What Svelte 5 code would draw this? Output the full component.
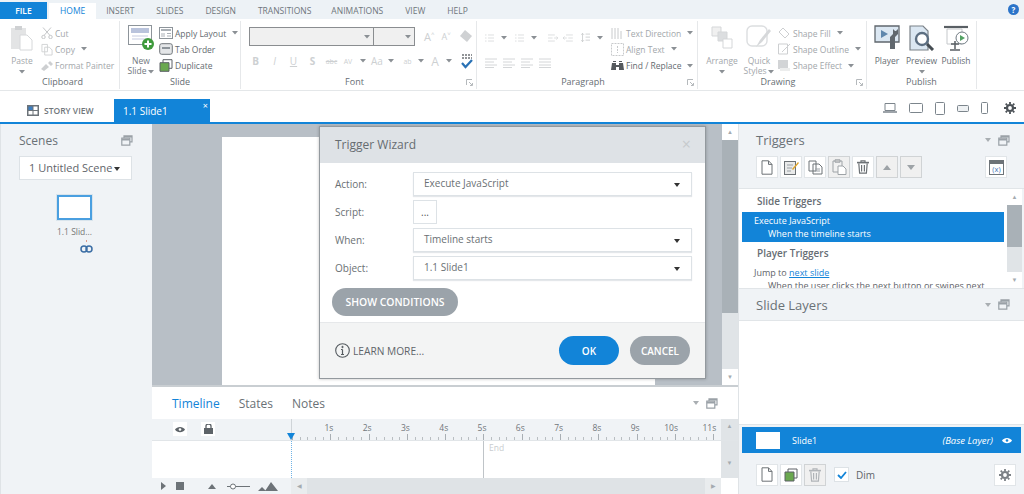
<script>
  const tabs = ["HOME", "INSERT", "SLIDES", "DESIGN", "TRANSITIONS", "ANIMATIONS", "VIEW", "HELP"];
  const seconds = [1, 2, 3, 4, 5, 6, 7, 8, 9, 10, 11];
  const fields = [
    { label: "Action:", value: "Execute JavaScript" },
    { label: "Script:", button: true },
    { label: "When:", value: "Timeline starts" },
    { label: "Object:", value: "1.1 Slide1" },
  ];
</script>

{#snippet caret()}
  <svg class="caret" width="6" height="4" viewBox="0 0 6 4"><path d="M0 0h6L3 3.5z" /></svg>
{/snippet}

{#snippet restore()}
  <svg width="12" height="11" viewBox="0 0 12 11" fill="none" stroke="#9aa1a7" stroke-width="1.2">
    <path d="M3 3V.8h8v6H9" /><path d="M.8 3.2h8v7h-8z" /><path d="M.8 4.6h8M3 1.8h8" stroke-width="1.6" />
  </svg>
{/snippet}

{#snippet launcher()}
  <svg class="launch" width="7" height="7" viewBox="0 0 7 7" fill="none" stroke="#b5b9bc"><path d="M.5 6V.5H6" /><path d="M3 3l3 3M4 6.500h2.500V4" /></svg>
{/snippet}

{#snippet pageIcon()}
  <svg width="12" height="15" viewBox="0 0 12 15" fill="#fff" stroke="#6d7276"><path d="M1 .8h6.5L11 4.4v9.8H1zM7.5.8v3.6H11" /></svg>
{/snippet}

{#snippet trashIcon(color)}
  <svg width="12" height="14" viewBox="0 0 12 14" fill="none" stroke={color} stroke-width="1.2">
    <path d="M0 2.6h12" stroke-width="1.6" /><path d="M4 2V.8h4V2M1.8 3.4l.8 9.8h6.8l.8-9.8M4.6 5v6.5M7.4 5v6.5" />
  </svg>
{/snippet}

<div class="app">
  <header class="tabbar">
    <div class="file">FILE</div>
    {#each tabs as tab, i}
      <div class="tab" class:current={i === 0}>{tab}</div>
    {/each}
    <div class="help">?</div>
  </header>

  <section class="ribbon">
    <div class="group" style="width: 120px">
      <div class="tools">
        <div class="big wide-paste">
          <svg width="24" height="26" viewBox="0 0 24 26">
            <rect x="1" y="3" width="15" height="21" fill="#e3e4e5" />
            <rect x="5" y="1" width="7" height="4" fill="#cfd1d3" />
            <path d="M10 10h7l5 5v10H10z" fill="#fff" stroke="#d6d8da" />
          </svg>
          <span>Paste</span>
          {@render caret()}
        </div>
        <div class="stack">
          <div class="row">
            <svg width="12" height="12" viewBox="0 0 12 12" fill="none" stroke="#c4c6c8"><path d="M2 .5l7 8M10 .5l-7 8" /><circle cx="2.5" cy="10" r="1.7" /><circle cx="9.5" cy="10" r="1.7" /></svg>
            Cut
          </div>
          <div class="row">
            <svg width="12" height="13" viewBox="0 0 13 13" fill="#fff" stroke="#d0d2d4"><path d="M1 1h6v8H1zM4 4h5l3 3v5.500H4z" /></svg>
            Copy {@render caret()}
          </div>
          <div class="row">
            <svg width="12" height="12" viewBox="0 0 12 12" fill="#cdcfd1"><path d="M0 9l5-5 3 3-5 4zM7 3l2-2 3 3-2 2z" /></svg>
            Format Painter
          </div>
        </div>
      </div>
      <div class="caption shift">Clipboard</div>
    </div>

    <div class="group" style="width: 121px">
      <div class="tools">
        <div class="big new-slide">
          <svg width="26" height="26" viewBox="0 0 26 26">
            <rect x=".5" y=".5" width="23" height="19" fill="#fff" stroke="#8d949a" />
            <rect x="3" y="3" width="18" height="5" fill="#b9c3dc" />
            <path d="M4 11h16M4 14h16" stroke="#c5cbe0" />
            <circle cx="20" cy="19" r="6" fill="#3f9a3c" />
            <path d="M20 15.500v7M16.500 19h7" stroke="#fff" stroke-width="2" />
          </svg>
          <span>New</span>
          <span>Slide{@render caret()}</span>
        </div>
        <div class="stack dark">
          <div class="row">
            <svg width="14" height="12" viewBox="0 0 14 12"><rect x=".5" y=".5" width="13" height="11" fill="#fff" stroke="#8d949a" /><rect x="2" y="2" width="10" height="2" fill="#aab0b6" /><path d="M2 6h4v4H2z" fill="#d5d8db" /><path d="M8 6.500h4M8 9h4" stroke="#aab0b6" /></svg>
            Apply Layout {@render caret()}
          </div>
          <div class="row">
            <svg width="14" height="12" viewBox="0 0 14 12"><rect x=".7" y=".7" width="12.600" height="10.600" rx="2" fill="#e4e6e8" stroke="#70767b" /><rect x="3" y="4" width="8" height="2" fill="#8d949a" /></svg>
            Tab Order
          </div>
          <div class="row">
            <svg width="14" height="13" viewBox="0 0 14 13" fill="#fff" stroke="#5c6166"><path d="M4 .7h9v8.600H4z" /><path d="M1 3.700h9v8.600H1z" fill="#6aa84f" /></svg>
            Duplicate
          </div>
        </div>
      </div>
      <div class="caption">Slide</div>
    </div>

    <div class="group" style="width: 236px">
      <div class="font-tools">
        <div class="font-top">
          <div class="combo name"><i></i>{@render caret()}</div>
          <div class="combo size"><i></i>{@render caret()}</div>
          <span class="ghost big-a">A<sup>˄</sup></span>
          <span class="ghost small-a">A<sup>˅</sup></span>
          <svg width="13" height="13" viewBox="0 0 13 13" fill="#cfd1d3"><path d="M6 0l7 6-5 6-7-6z" /></svg>
        </div>
        <div class="font-bottom ghost">
          <b class="c19">B</b><em class="c19">I</em><u class="c19">U</u><span class="c19 strong">S</span><s class="c19 tiny">abc</s>
          <span class="tiny av">AV</span><span class="cc">{@render caret()}</span>
          <span class="aa">Aa</span><span class="cc">{@render caret()}</span>
          <span class="tiny ab">ab</span><span class="cc">{@render caret()}</span>
          <span class="letter">A</span><span class="cc">{@render caret()}</span>
          <svg class="spell" width="12" height="15" viewBox="0 0 12 15" fill="none"><path d="M1 9l3.500 4L11 6" stroke="#2a72b5" stroke-width="2.200" /><path d="M1 1h10M1 4h10" stroke="#6d7276" stroke-width="1.500" stroke-dasharray="2 1" /></svg>
        </div>
      </div>
      <div class="caption launched">Font{@render launcher()}</div>
    </div>

    <div class="group" style="width: 221px">
      <div class="tools">
        <div class="para-grid">
          <div class="para-row">
            <svg width="12" height="12" viewBox="0 0 12 12" stroke="#d4d6d8"><path d="M4 2h8M4 6h8M4 10h8M0 2h2M0 6h2M0 10h2" /></svg>{@render caret()}
            <svg width="12" height="12" viewBox="0 0 12 12" stroke="#d4d6d8"><path d="M4 2h8M4 6h8M4 10h8M0 2h2M0 6h2M0 10h2" /></svg>{@render caret()}
            <svg class="indent" width="13" height="10" viewBox="0 0 13 10" stroke="#d4d6d8"><path d="M0 1h9M0 5h6M0 9h9M8 5h5M11 3l2 2-2 2" fill="none" /></svg>
            <svg width="13" height="10" viewBox="0 0 13 10" stroke="#d4d6d8"><path d="M4 1h9M7 5h6M4 9h9M0 5h5M2 3L0 5l2 2" fill="none" /></svg>
            <svg class="indent" width="12" height="13" viewBox="0 0 12 13" stroke="#c3c6c8" fill="none"><path d="M2 1v11M0 3l2-2 2 2M0 10l2 2 2-2M6 2h6M6 6h6M6 10h6" /></svg>{@render caret()}
          </div>
          <div class="para-row align">
            {#each [0, 1, 2, 3] as a}
              <svg width="12" height="10" viewBox="0 0 12 10" stroke="#d4d6d8"><path d="M0 1h12M0 4h{a === 3 ? 12 : 9}M0 7h12M0 9.500h{a === 3 ? 12 : 9}" /></svg>
            {/each}
          </div>
        </div>
        <div class="stack">
          <div class="row">
            <svg width="13" height="14" viewBox="0 0 13 14" stroke="#c8cacc" fill="none"><path d="M1 2v11M4 2v11M7 2v11M10 5v8" /></svg>
            Text Direction {@render caret()}
          </div>
          <div class="row">
            <svg width="13" height="13" viewBox="0 0 13 13" stroke="#c8cacc" fill="none" stroke-dasharray="2 1"><path d="M.5.500h12v12H.500zM6.500 3v7" /></svg>
            Align Text {@render caret()}
          </div>
          <div class="row dark">
            <svg width="13" height="12" viewBox="0 0 13 12" fill="#55595d"><path d="M1 3h4v2h3V3h4l1 7H8V7H5v3H0zM2 1h3v1H2zM8 1h3v1H8z" /></svg>
            Find / Replace {@render caret()}
          </div>
        </div>
      </div>
      <div class="caption launched">Paragraph{@render launcher()}</div>
    </div>

    <div class="group" style="width: 169px">
      <div class="tools">
        <div class="big arrange">
          <svg width="24" height="24" viewBox="0 0 24 24" stroke="#d5d7d9"><path d="M2 1h9v9H2z" fill="#f0f0f0" /><path d="M8 6h9v9H8z" fill="#dcdee0" /><path d="M13 13h9v9h-9z" fill="#fff" /></svg>
          <span>Arrange</span>
          {@render caret()}
        </div>
        <div class="big quick">
          <svg width="26" height="26" viewBox="0 0 26 26" fill="none"><rect x="1" y="1" width="20" height="20" rx="5" stroke="#dcdee0" stroke-width="1.400" /><path d="M10 22l4-7 9-11 2 2-9 11z" fill="#d6d8da" /></svg>
          <span>Quick</span>
          <span>Styles{@render caret()}</span>
        </div>
        <div class="stack">
          <div class="row">
            <svg width="13" height="12" viewBox="0 0 13 12" fill="#fff" stroke="#cdcfd1"><path d="M5 1l6 6-4 4-6-6z" /></svg>
            Shape Fill {@render caret()}
          </div>
          <div class="row">
            <svg width="13" height="12" viewBox="0 0 13 12" fill="none" stroke="#cdcfd1"><path d="M.5 1h9v10H.500zM4 9l8-8" /></svg>
            Shape Outline {@render caret()}
          </div>
          <div class="row">
            <svg width="13" height="12" viewBox="0 0 13 12"><rect x="0" y="0" width="10" height="9" fill="#d2d4d6" /><rect x="2" y="8" width="10" height="3" fill="#eceded" /></svg>
            Shape Effect {@render caret()}
          </div>
        </div>
      </div>
      <div class="caption launched">Drawing{@render launcher()}</div>
    </div>

    <div class="group last" style="width: 110px">
      <div class="tools publish">
        <div class="big">
          <svg width="26" height="26" viewBox="0 0 26 26" fill="none">
            <path d="M1 1h24v16H1z" fill="#dbe7f2" stroke="#60676d" stroke-width="1.300" />
            <path d="M7 5l7 4-7 4z" fill="#5f87ad" />
            <path d="M19 4v5l-3 3v12h5V12l3-3V4l-2 2h-1z" fill="#61686e" />
          </svg>
          <span>Player</span>
        </div>
        <div class="big">
          <svg width="26" height="26" viewBox="0 0 26 26" fill="none">
            <path d="M1 1h13l5 5v19H1z" fill="#dbe7f2" stroke="#7b8288" stroke-width="1.200" />
            <circle cx="13" cy="14" r="6" fill="#fff" stroke="#5d6f82" stroke-width="2.400" />
            <path d="M18 19l6 6" stroke="#454c52" stroke-width="3" />
          </svg>
          <span>Preview</span>
          {@render caret()}
        </div>
        <div class="big">
          <svg width="26" height="26" viewBox="0 0 26 26" fill="none">
            <path d="M1 2h24" stroke="#595f64" stroke-width="2.200" />
            <path d="M4 4h15v15H4z" fill="#fff" stroke="#c5c8cb" />
            <circle cx="19" cy="13" r="6" fill="#fff" stroke="#6f7a82" />
            <path d="M17 10l5 3-5 3z" fill="#53a264" />
            <path d="M8 19h8M12 16v8M7 25h10" stroke="#595f64" stroke-width="1.500" />
          </svg>
          <span>Publish</span>
        </div>
      </div>
      <div class="caption">Publish</div>
    </div>
  </section>

  <nav class="viewbar">
    <div class="storyview">
      <svg width="12" height="11" viewBox="0 0 12 11"><rect width="12" height="11" fill="#6c7379" /><rect x="1.500" y="1.500" width="4" height="3.500" fill="#3d7fc1" /><rect x="6.500" y="1.500" width="4" height="3.500" fill="#fff" /><rect x="1.500" y="6" width="4" height="3.500" fill="#fff" /><rect x="6.500" y="6" width="4" height="3.500" fill="#fff" /></svg>
      STORY VIEW
    </div>
    <div class="slidetab">1.1 Slide1<span class="tabclose">×</span></div>
    <div class="devices">
      <svg width="14" height="10" viewBox="0 0 14 10" fill="none" stroke="#7c858c"><path d="M2 .5h10v7H2z" /><path d="M0 9h14" stroke-width="1.500" /></svg>
      <svg width="14" height="10" viewBox="0 0 14 10" fill="none" stroke="#7c858c"><rect x=".5" y=".5" width="13" height="9" rx="1" /></svg>
      <svg width="10" height="13" viewBox="0 0 10 13" fill="none" stroke="#7c858c"><rect x=".5" y=".5" width="9" height="12" rx="1" /></svg>
      <svg width="12" height="7" viewBox="0 0 12 7" fill="#eef1f3" stroke="#7c858c"><rect x=".5" y=".5" width="11" height="6" rx="1" /></svg>
      <svg width="7" height="12" viewBox="0 0 7 12" fill="none" stroke="#7c858c"><rect x=".5" y=".5" width="6" height="11" rx="1" /></svg>
      <svg class="gear" width="12" height="12" viewBox="0 0 12 12" fill="none" stroke="#4c5257"><circle cx="6" cy="6" r="3" stroke-width="2.200" /><path d="M6 0v2M6 10v2M0 6h2M10 6h2M1.700 1.700l1.400 1.400M8.900 8.900l1.400 1.400M1.700 10.300l1.400-1.400M8.900 3.100l1.400-1.400" stroke-width="1.800" /></svg>
    </div>
  </nav>

  <main class="main">
    <aside class="scenes">
      <div class="panel-head">
        <h2>Scenes</h2>
        {@render restore()}
      </div>
      <div class="scene-select">1 Untitled Scene <span class="arrow"></span></div>
      <div class="thumb"></div>
      <div class="thumb-label">1.1 Slid...</div>
      <div class="red-dot"></div>
      <svg class="link" width="13" height="8" viewBox="0 0 13 8" fill="none" stroke="#3c6ea5" stroke-width="1.500"><rect x="1" y="1" width="6" height="6" rx="3" /><rect x="6" y="1" width="6" height="6" rx="3" /></svg>
    </aside>

    <div class="center">
      <div class="stage-wrap">
        <div class="stage">
          <div class="slide"></div>
          <div class="dialog">
            <div class="dlg-head">Trigger Wizard <span class="dlg-close">×</span></div>
            <div class="dlg-body">
              {#each fields as f}
                <div class="field">
                  <label>{f.label}</label>
                  {#if f.button}
                    <div class="dots">...</div>
                  {:else}
                    <div class="select">{f.value}<span class="arrow"></span></div>
                  {/if}
                </div>
              {/each}
              <button class="pill grey conditions">SHOW CONDITIONS</button>
            </div>
            <div class="dlg-foot">
              <svg width="15" height="15" viewBox="0 0 15 15" fill="none" stroke="#555b60"><circle cx="7.500" cy="7.500" r="6.800" stroke-width="1.100" /><path d="M7.500 6.500v5M6 11.500h3M6 6.500h1.500" stroke-width="1.200" /><circle cx="7.500" cy="4" r=".7" fill="#555b60" /></svg>
              <span class="learn">LEARN MORE...</span>
              <button class="pill blue">OK</button>
              <button class="pill grey cancel">CANCEL</button>
            </div>
          </div>
        </div>
        <div class="vscroll">
          <div class="sarrow">▲</div>
          <div class="sthumb"></div>
          <div class="strack"></div>
          <div class="sarrow">▼</div>
        </div>
      </div>

      <div class="timeline">
        <div class="tl-tabs">
          <span class="active">Timeline</span>
          <span>States</span>
          <span>Notes</span>
          <div class="tl-tools"><span class="arrow light"></span>{@render restore()}</div>
        </div>
        <div class="ruler-row">
          <div class="tl-left">
            <div class="mini">
              <svg width="10" height="7" viewBox="0 0 10 7"><path d="M0 3.500C2 0 8 0 10 3.500 8 7 2 7 0 3.500z" fill="#5d6368" /><circle cx="5" cy="3.500" r="1.300" fill="#fff" /></svg>
            </div>
            <div class="mini">
              <svg width="9" height="10" viewBox="0 0 9 10" fill="#5d6368"><path d="M0 4h9v6H0z" /><path d="M2 4V2a2.500 2 0 0 1 5 0v2" fill="none" stroke="#5d6368" stroke-width="1.300" /></svg>
            </div>
          </div>
          <div class="ruler">
            <div class="playhead"></div>
            {#each seconds as s}
              <div class="sec">{s}s</div>
            {/each}
          </div>
          <div class="rside">▲</div>
        </div>
        <div class="track-row">
          <div class="track-left"></div>
          <div class="track">
            <div class="end">End</div>
          </div>
          <div class="rside low">▼</div>
        </div>
        <div class="tl-bottom">
          <div class="controls">
            <span class="play"></span>
            <span class="stop"></span>
            <span class="up"></span>
            <svg class="slider" width="23" height="7" viewBox="0 0 23 7" fill="#fff" stroke="#6d7378"><path d="M0 3.500h23" /><circle cx="6" cy="3.500" r="2.500" /></svg>
            <svg width="21" height="9" viewBox="0 0 21 9" fill="#6d7378"><path d="M0 9l4-4 4 4zM7 9l6-9 7 9z" /></svg>
          </div>
          <div class="hscroll">
            <span class="hbtn">◀</span>
            <span class="hbar"></span>
            <span class="hbtn">▶</span>
          </div>
        </div>
      </div>
    </div>

    <aside class="side">
      <div class="panel-head triggers">
        <h2>Triggers</h2>
        <div class="tl-tools"><span class="arrow light"></span>{@render restore()}</div>
      </div>
      <div class="toolbar">
        <div class="tbtn">{@render pageIcon()}</div>
        <div class="tbtn">
          <svg width="15" height="15" viewBox="0 0 15 15"><rect x=".5" y="1.500" width="11" height="13" fill="#e9eaea" stroke="#6d7276" /><path d="M3 5h6M3 8h5M3 11h4" stroke="#9aa0a5" /><path d="M8 9l6-7 1 1-6 7z" fill="#e0a52b" /></svg>
        </div>
        <div class="tbtn">
          <svg width="15" height="15" viewBox="0 0 15 15" fill="#fff" stroke="#6d7276"><path d="M1 1h7v10H1zM5 4h6l3 3v7H5z" /><path d="M7 9h5M7 11h5" stroke="#9aa0a5" /></svg>
        </div>
        <div class="tbtn off">
          <svg width="15" height="16" viewBox="0 0 15 16" fill="#f2f2f2" stroke="#9ea3a7"><path d="M1 2h9v11H1z" /><path d="M3 .8h5v2.400H3z" fill="#ccc" /><path d="M6 7h5l3 3v5.500H6z" fill="#fff" /></svg>
        </div>
        <div class="tbtn">{@render trashIcon("#6d7276")}</div>
        <div class="tbtn off"><span class="up small"></span></div>
        <div class="tbtn off"><span class="down small"></span></div>
        <div class="tbtn var">
          <svg width="15" height="15" viewBox="0 0 15 15"><rect x=".5" y=".5" width="14" height="14" fill="#fff" stroke="#6d7378" /><rect x="1" y="1" width="13" height="3" fill="#6d7378" /><text x="7.500" y="12" font-size="7.500" font-family="Open Sans" fill="#3f74b5" text-anchor="middle">(x)</text></svg>
        </div>
      </div>

      <div class="trigger-box">
        <div class="trigger-list">
          <h3>Slide Triggers</h3>
          <div class="trigger selected">
            <div>Execute JavaScript</div>
            <div class="when">When the timeline starts</div>
          </div>
          <h3>Player Triggers</h3>
          <div class="trigger">
            <div>Jump to <a href="#next">next slide</a></div>
            <div class="when">When the user clicks the next button or swipes next</div>
          </div>
        </div>
        <div class="vscroll small">
          <div class="sarrow">▲</div>
          <div class="sthumb"></div>
          <div class="strack"></div>
          <div class="sarrow">▼</div>
        </div>
      </div>

      <div class="panel-head layers">
        <h2>Slide Layers</h2>
        <div class="tl-tools"><span class="arrow light"></span>{@render restore()}</div>
      </div>
      <div class="layer-list"></div>
      <div class="layer">
        <div class="layer-thumb"></div>
        <span>Slide1</span>
        <em>(Base Layer)</em>
        <svg width="10" height="7" viewBox="0 0 10 7"><path d="M0 3.500C2 0 8 0 10 3.500 8 7 2 7 0 3.500z" fill="#fff" /><circle cx="5" cy="3.500" r="1.300" fill="#1284d8" /></svg>
      </div>
      <div class="layer-foot">
        <div class="tbtn">{@render pageIcon()}</div>
        <div class="tbtn">
          <svg width="14" height="14" viewBox="0 0 14 14" fill="#fff" stroke="#5c6166"><path d="M4 1h9v9H4z" /><path d="M1 4h9v9H1z" fill="#6aa84f" /></svg>
        </div>
        <div class="tbtn off">{@render trashIcon("#b0b4b8")}</div>
        <div class="check">
          <svg width="10" height="8" viewBox="0 0 10 8" fill="none" stroke="#1284d8" stroke-width="1.800"><path d="M1 4l3 3 5-6" /></svg>
        </div>
        <span class="dim">Dim</span>
        <div class="tbtn gearbtn">
          <svg width="12" height="12" viewBox="0 0 12 12" fill="none" stroke="#7c8186"><circle cx="6" cy="6" r="3" stroke-width="2.200" /><path d="M6 0v2M6 10v2M0 6h2M10 6h2M1.700 1.700l1.400 1.400M8.900 8.900l1.400 1.400M1.700 10.300l1.400-1.400M8.900 3.100l1.400-1.400" stroke-width="1.800" /></svg>
        </div>
      </div>
    </aside>
  </main>
</div>

<style>
  :global(body) {
    margin: 0;
    font-family: "Open Sans", sans-serif;
    color: #5f656a;
    overflow: hidden;
  }
  .app {
    width: 1024px;
    height: 494px;
    background: #fff;
    display: flex;
    flex-direction: column;
    overflow: hidden;
  }

  /* top tabs */
  .tabbar {
    height: 19px;
    background: #edf2f6;
    display: flex;
    align-items: flex-end;
    font-size: 8.5px;
    flex: none;
  }
  .file {
    width: 47px;
    height: 17px;
    background: #1284d8;
    color: #fff;
    text-align: center;
    line-height: 17px;
    font-weight: 600;
    margin-right: 2px;
  }
  .tab {
    padding: 0 11px;
    height: 16px;
    line-height: 16px;
    color: #6f767c;
  }
  .tab:nth-child(6) {
    margin-right: -2px;
  }
  .tab.current {
    background: #fff;
    color: #1284d8;
    margin-right: -1px;
  }
  .help {
    margin: 0 5px 4px auto;
    width: 11px;
    height: 11px;
    border-radius: 50%;
    background: #2b74c9;
    color: #fff;
    font-size: 8px;
    font-weight: 700;
    line-height: 11px;
    text-align: center;
  }

  /* ribbon */
  .ribbon {
    height: 72px;
    flex: none;
    display: flex;
    background: #fff;
    border-bottom: 1px solid #e4e7e9;
    box-sizing: border-box;
    font-size: 8.5px;
    color: #a3a7ab;
  }
  .group {
    display: flex;
    flex-direction: column;
    border-right: 1px solid #e6e8ea;
    box-sizing: border-box;
    flex: none;
    height: 68px;
    margin-top: 2px;
  }
  .tools,
  .font-tools {
    flex: 1;
    display: flex;
    padding: 4px 0 0 8px;
    gap: 5px;
    min-height: 0;
  }
  .font-tools {
    flex-direction: column;
    gap: 7px;
    padding-top: 6px;
  }
  .caption {
    height: 15px;
    line-height: 15px;
    text-align: center;
    color: #666d73;
    font-size: 9px;
    position: relative;
  }
  .caption.shift {
    padding-left: 6px;
  }
  .caption.launched {
    padding-right: 8px;
  }
  .launch {
    position: absolute;
    right: 3px;
    top: 5px;
  }
  .big {
    display: flex;
    flex-direction: column;
    align-items: center;
    line-height: 10px;
    white-space: nowrap;
  }
  .big > svg:first-child {
    margin-bottom: 5px;
    height: 26px;
    flex: none;
  }
  .big > .caret {
    margin: 4px 0 0;
  }
  .big span .caret {
    vertical-align: middle;
  }
  .wide-paste {
    width: 28px;
  }
  .new-slide {
    width: 26px;
    color: #71777c;
  }
  .arrange {
    width: 32px;
  }
  .quick {
    width: 32px;
    margin-right: -2px;
  }
  .stack {
    display: flex;
    flex-direction: column;
  }
  .row {
    height: 17px;
    display: flex;
    align-items: center;
    gap: 2px;
    white-space: nowrap;
  }
  .row .caret {
    margin-left: 4px;
  }
  .dark {
    color: #656b70;
  }
  .caret {
    fill: #8b9095;
    flex: none;
    margin-left: 2px;
  }

  .font-top {
    display: flex;
    align-items: center;
    height: 19px;
    flex: none;
  }
  .combo {
    height: 19px;
    box-sizing: border-box;
    background: #f0f0f0;
    border: 1px solid #8a8d90;
    display: flex;
    align-items: center;
    justify-content: flex-end;
    padding-right: 3px;
  }
  .combo i {
    flex: 1;
  }
  .combo.name {
    width: 125px;
  }
  .combo.size {
    width: 41px;
    border-left: 0;
    margin-right: 9px;
  }
  .ghost {
    color: #cdd0d2;
  }
  .big-a {
    font-size: 11px;
    margin-right: 7px;
  }
  .small-a {
    font-size: 9px;
    margin-right: 8px;
  }
  .font-top sup {
    font-size: 6px;
  }
  .font-bottom {
    display: flex;
    align-items: center;
    height: 16px;
    font-size: 10px;
    margin-left: -3px;
    text-align: center;
  }
  .c19 {
    width: 19px;
    flex: none;
  }
  .cc {
    width: 12px;
    flex: none;
    display: flex;
    justify-content: center;
  }
  .cc .caret {
    margin: 0;
  }
  .av {
    width: 14px;
    margin-right: 2px;
  }
  .aa {
    width: 16px;
  }
  .ab {
    width: 15px;
    margin-left: 3px;
  }
  .letter {
    width: 16px;
    font-size: 12px;
  }
  .spell {
    margin-left: 6px;
  }
  .tiny {
    font-size: 7px;
  }
  .strong {
    font-weight: 700;
  }

  .para-grid {
    width: 121px;
    display: flex;
    flex-direction: column;
    gap: 14px;
    padding-top: 6px;
  }
  .para-row {
    display: flex;
    align-items: center;
    gap: 5px;
  }
  .para-row .caret {
    margin-right: 3px;
  }
  .para-row .indent {
    margin-left: 3px;
  }
  .para-row.align {
    gap: 6px;
  }
  .publish {
    gap: 4.5px;
    padding-left: 5px;
    color: #666d73;
  }
  .publish .big {
    width: 30px;
  }

  /* story view row */
  .viewbar {
    height: 31px;
    flex: none;
    box-sizing: border-box;
    display: flex;
    align-items: flex-end;
    font-size: 8.5px;
    color: #666d73;
  }
  .storyview {
    display: flex;
    align-items: center;
    gap: 5px;
    margin-left: 27px;
    width: 87px;
    height: 23px;
    font-weight: 600;
    color: #70767b;
  }
  .slidetab {
    width: 96px;
    height: 23px;
    box-sizing: border-box;
    background: #1284d8;
    color: #fff;
    font-size: 10px;
    line-height: 25px;
    padding-left: 9px;
    position: relative;
  }
  .tabclose {
    position: absolute;
    right: 2px;
    top: -6px;
    font-size: 9px;
  }
  .devices {
    margin-left: auto;
    display: flex;
    align-items: center;
    height: 28px;
    gap: 12px;
    padding-right: 8px;
  }
  .gear {
    margin-left: 4px;
  }

  /* main area */
  .main {
    flex: 1;
    min-height: 0;
    display: flex;
    border-top: 2px solid #1284d8;
  }
  .scenes {
    width: 152px;
    flex: none;
    background: #f0f3f6;
    box-sizing: border-box;
    padding: 0 19px 0 18px;
    display: flex;
    flex-direction: column;
    border-left: 1px solid #dfe3e6;
  }
  .panel-head {
    display: flex;
    align-items: center;
    justify-content: space-between;
    height: 32px;
    flex: none;
  }
  h2 {
    margin: 0;
    font-size: 12px;
    font-weight: 400;
    color: #6a7176;
  }
  .scene-select {
    height: 24px;
    width: 113px;
    box-sizing: border-box;
    background: #fff;
    border: 1px solid #dde2e6;
    font-size: 11px;
    line-height: 22px;
    padding-left: 9px;
    position: relative;
    flex: none;
    white-space: nowrap;
  }
  .arrow {
    width: 0;
    height: 0;
    border: 3.500px solid transparent;
    border-top: 4px solid #333;
    border-bottom: 0;
    position: absolute;
    right: 11px;
    top: 10px;
  }
  .arrow.light {
    position: static;
    display: block;
    border-top-color: #a9aeb2;
  }
  .thumb {
    width: 35px;
    height: 25px;
    box-sizing: border-box;
    border: 2px solid #4a9fe0;
    background: #fff;
    outline: 1px solid #d9e4ec;
    margin: 15px 0 0 38px;
    flex: none;
  }
  .thumb-label {
    font-size: 8.5px;
    margin: 6px 0 0 38px;
    color: #777;
    white-space: nowrap;
  }
  .red-dot {
    width: 1px;
    height: 2px;
    background: #d98;
    margin: 3px 0 0 67px;
  }
  .link {
    margin: 3px 0 0 61px;
  }

  .center {
    width: 586px;
    flex: none;
    display: flex;
    flex-direction: column;
  }
  .stage-wrap {
    height: 261px;
    display: flex;
    border-bottom: 2px solid #c9ced2;
    flex: none;
  }
  .stage {
    flex: 1;
    background: #b8bfc6;
    position: relative;
    padding: 13px 0 0 70px;
    overflow: hidden;
  }
  .slide {
    width: 433px;
    height: 100%;
    background: #fff;
  }
  .dialog {
    position: absolute;
    left: 167px;
    top: 2px;
    width: 387px;
    height: 253px;
    box-sizing: border-box;
    background: #fff;
    border: 1px solid #93999e;
    box-shadow: 0 0 3px rgba(0, 0, 0, 0.25);
    display: flex;
    flex-direction: column;
    font-size: 10px;
  }
  .dlg-head {
    height: 36px;
    flex: none;
    box-sizing: border-box;
    background: #dee2e6;
    font-size: 12px;
    line-height: 35px;
    padding: 0 15px;
    display: flex;
    justify-content: space-between;
    color: #666c71;
  }
  .dlg-close {
    color: #c6cacd;
    font-size: 16px;
    margin-right: -1px;
  }
  .dlg-body {
    flex: 1;
    padding: 9px 13px 0 15px;
    display: flex;
    flex-direction: column;
    gap: 5px;
  }
  .field {
    display: flex;
    align-items: center;
    height: 23px;
  }
  .field label {
    width: 78px;
    color: #6a7074;
  }
  .select {
    flex: 1;
    height: 24px;
    box-sizing: border-box;
    border: 1px solid #dde2e6;
    box-shadow: 0 1px 1px #e4e7ea;
    padding-left: 10px;
    line-height: 20px;
    position: relative;
    color: #6a7074;
  }
  .dots {
    width: 24px;
    height: 24px;
    box-sizing: border-box;
    border: 1px solid #dde2e6;
    text-align: center;
    line-height: 22px;
    color: #555;
  }
  .pill {
    border: 0;
    border-radius: 15px;
    font-family: inherit;
    font-size: 10px;
    font-weight: 600;
    color: #fff;
    padding: 0;
    height: 29px;
  }
  .pill.grey {
    background: #9ba3aa;
  }
  .pill.blue {
    background: #1284d8;
    width: 60px;
    margin-left: auto;
  }
  .conditions {
    width: 126px;
    height: 28px;
    font-size: 10.4px;
    margin: 4px 0 0 -3px;
    flex: none;
  }
  .cancel {
    width: 60px;
    margin-left: 8px;
  }
  .dlg-foot {
    height: 56px;
    flex: none;
    box-sizing: border-box;
    background: #f3f4f4;
    border-top: 1px solid #e6e8ea;
    padding: 0 15px;
    display: flex;
    align-items: center;
    gap: 3px;
  }
  .learn {
    font-size: 10.2px;
  }

  .vscroll {
    width: 16px;
    flex: none;
    display: flex;
    flex-direction: column;
    background: #fff;
  }
  .sarrow {
    height: 16px;
    line-height: 16px;
    text-align: center;
    font-size: 6px;
    color: #a5abb0;
    background: #fff;
    flex: none;
  }
  .sthumb {
    height: 173px;
    background: #a9b1b7;
    flex: none;
  }
  .strack {
    flex: 1;
    background: #e0e4e7;
  }

  /* timeline */
  .timeline {
    flex: 1;
    display: flex;
    flex-direction: column;
    min-height: 0;
  }
  .tl-tabs {
    height: 32px;
    flex: none;
    display: flex;
    align-items: center;
    gap: 19px;
    padding: 0 20px;
    font-size: 12px;
    color: #6a7176;
  }
  .tl-tabs .active {
    color: #1284d8;
  }
  .tl-tools {
    display: flex;
    align-items: center;
    gap: 7px;
    margin-left: auto;
  }
  .ruler-row {
    height: 22px;
    display: flex;
    flex: none;
    background: #f0f3f6;
    border-bottom: 1px solid #e1e5e8;
    box-sizing: border-box;
  }
  .tl-left {
    width: 139px;
    flex: none;
    display: flex;
    gap: 14px;
    padding: 3px 0 0 21px;
    box-sizing: border-box;
  }
  .mini {
    width: 14px;
    height: 14px;
    background: #fff;
    display: flex;
    align-items: center;
    justify-content: center;
  }
  .ruler {
    width: 430px;
    flex: none;
    display: flex;
    position: relative;
    border-left: 1px solid #cfd4d8;
    box-sizing: border-box;
    background-image:
      repeating-linear-gradient(to right, #a9afb4 0 1px, transparent 1px 38.3px),
      repeating-linear-gradient(to right, #b9bec2 0 1px, transparent 1px 7.66px);
    background-size: 100% 6px, 100% 3px;
    background-position: 0 bottom;
    background-repeat: no-repeat;
  }
  .playhead {
    position: absolute;
    left: -5px;
    bottom: 0;
    width: 0;
    height: 0;
    border: 4.500px solid transparent;
    border-top: 7px solid #1284d8;
    border-bottom: 0;
  }
  .sec {
    width: 38.3px;
    flex: none;
    box-sizing: border-box;
    text-align: right;
    font-size: 8.5px;
    line-height: 17px;
    color: #70767b;
    transform: translateX(3px);
  }
  .rside {
    width: 17px;
    flex: none;
    background: #e0e4e7;
    text-align: center;
    font-size: 6px;
    line-height: 14px;
    color: #a5abb0;
  }
  .rside.low {
    display: flex;
    align-items: flex-end;
    justify-content: center;
    padding-bottom: 8px;
    box-sizing: border-box;
  }
  .track-row {
    flex: 1;
    display: flex;
    min-height: 0;
  }
  .track-left {
    width: 139px;
    flex: none;
  }
  .track {
    width: 430px;
    flex: none;
    box-sizing: border-box;
    border-left: 1px dotted #6fb3e6;
    background: #fff;
  }
  .end {
    margin-left: 191px;
    height: 100%;
    border-left: 1px solid #bfc4c8;
    padding-left: 5px;
    font-size: 8.5px;
    color: #c9cdd0;
    line-height: 14px;
  }
  .tl-bottom {
    height: 16px;
    flex: none;
    display: flex;
  }
  .controls {
    width: 139px;
    flex: none;
    box-sizing: border-box;
    padding-left: 9px;
    display: flex;
    align-items: center;
    background: #f0f3f6;
  }
  .play {
    width: 0;
    height: 0;
    border: 4px solid transparent;
    border-left: 5px solid #6d7378;
    border-right: 0;
    margin-right: 10px;
  }
  .stop {
    width: 8px;
    height: 8px;
    background: #6d7378;
    margin-right: 24px;
  }
  .up,
  .down {
    width: 0;
    height: 0;
    border: 4px solid transparent;
    border-top: 0;
    border-bottom: 5px solid #6d7378;
    display: block;
  }
  .down {
    border-bottom: 0;
    border-top: 5px solid #9ea3a7;
  }
  .up.small {
    border-bottom-color: #9ea3a7;
  }
  .slider {
    margin: 0 8px 0 11px;
  }
  .hscroll {
    width: 430px;
    flex: none;
    display: flex;
    background: #dfe3e6;
    align-items: stretch;
  }
  .hbtn {
    width: 16px;
    text-align: center;
    font-size: 6px;
    line-height: 16px;
    color: #a5abb0;
    background: #e9ecee;
    flex: none;
  }
  .hbar {
    flex: 1;
  }

  /* right column */
  .side {
    flex: 1;
    display: flex;
    flex-direction: column;
    background: #f0f3f6;
    min-width: 0;
    border-left: 1px solid #dfe3e6;
  }
  .side h2 {
    font-size: 13px;
  }
  .triggers {
    padding: 0 14px 0 17px;
  }
  .toolbar {
    display: flex;
    gap: 2px;
    height: 33px;
    padding-left: 17px;
    box-sizing: border-box;
    flex: none;
    border-bottom: 1px solid #e1e5e8;
  }
  .tbtn {
    width: 22px;
    height: 22px;
    box-sizing: border-box;
    background: #fff;
    border: 1px solid #e1e5e8;
    display: flex;
    align-items: center;
    justify-content: center;
    flex: none;
  }
  .tbtn.off {
    background: #f0f0f0;
    border-color: #d0d3d5;
  }
  .tbtn.var {
    margin-left: auto;
    margin-right: 17px;
  }
  .trigger-box {
    height: 99px;
    flex: none;
    display: flex;
    background: #fff;
    overflow: hidden;
    margin-right: 2px;
  }
  .trigger-list {
    width: 268px;
    flex: none;
    box-sizing: border-box;
    padding: 5px 3px 0 3px;
    font-size: 9px;
  }
  .trigger-list h3 {
    margin: 0;
    font-size: 10px;
    font-weight: 600;
    color: #666d73;
    line-height: 14px;
    padding-left: 15px;
  }
  .trigger-list h3:first-child {
    margin-bottom: 4px;
  }
  .trigger {
    padding-left: 12px;
    line-height: 13px;
    white-space: nowrap;
    margin-top: 6px;
  }
  .trigger a {
    color: #1284d8;
  }
  .trigger.selected {
    background: #1284d8;
    color: #fff;
    padding: 2px 0 2px 12px;
    margin: 0 0 4px;
  }
  .when {
    padding-left: 14px;
  }
  .vscroll.small {
    width: 15px;
  }
  .vscroll.small .sthumb {
    height: 42px;
  }
  .layers {
    padding: 0 14px 0 17px;
    border-top: 1px solid #e1e5e8;
    border-bottom: 1px solid #e1e5e8;
    height: 31px;
  }
  .layer-list {
    height: 103px;
    flex: none;
    background: #fff;
    border-bottom: 1px solid #e1e5e8;
  }
  .layer {
    height: 26px;
    margin: 2px 3px 0 3px;
    background: #1284d8;
    color: #fff;
    display: flex;
    align-items: center;
    font-size: 9px;
    padding: 0 9px 0 14px;
    flex: none;
  }
  .layer-thumb {
    width: 24px;
    height: 17px;
    background: #fff;
    margin-right: 12px;
  }
  .layer em {
    margin-left: auto;
    margin-right: 9px;
    font-size: 9.5px;
  }
  .layer-foot {
    display: flex;
    align-items: center;
    gap: 2px;
    padding: 2px 8px 0 17px;
    flex: 1;
  }
  .check {
    width: 15px;
    height: 15px;
    box-sizing: border-box;
    background: #fff;
    border: 1px solid #dde2e6;
    margin-left: 6px;
    display: flex;
    align-items: center;
    justify-content: center;
  }
  .dim {
    font-size: 10px;
    margin-left: 5px;
  }
  .gearbtn {
    margin-left: auto;
  }
</style>
